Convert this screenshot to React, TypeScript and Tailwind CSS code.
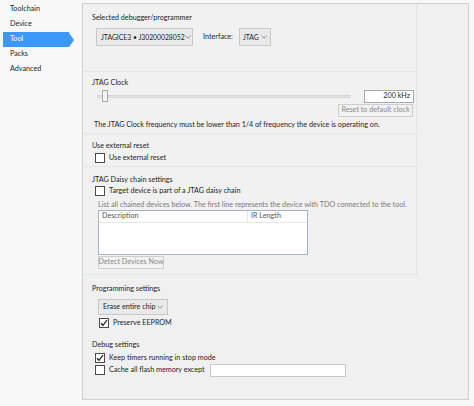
import React from "react";

const Check = ({ checked }: { checked?: boolean }) => (
  <span className="w-[10px] h-[10px] border border-[#4a4a4a] bg-white flex items-center justify-center shrink-0">
    {checked && (
      <svg width="8" height="8" viewBox="0 0 8 8">
        <path d="M1 4.2 L3 6.3 L7 1.2" stroke="#222" strokeWidth="1.3" fill="none" />
      </svg>
    )}
  </span>
);

const Chevron = () => (
  <svg width="6" height="4" viewBox="0 0 6 4" className="shrink-0">
    <path d="M0.5 0.8 L3 3.2 L5.5 0.8" stroke="#777" strokeWidth="0.8" fill="none" />
  </svg>
);

export default function App() {
  return (
    <div
      className="w-[474px] h-[406px] bg-[#f8f8f8] flex text-[#1e1e1e] overflow-hidden whitespace-nowrap"
      style={{ fontFamily: 'Lato, "Noto Sans", sans-serif', fontSize: "7.2px" }}
    >
      <div className="w-[82px] pt-[2px] flex flex-col shrink-0">
        <div className="h-[15px] pl-[10px] flex items-center">Toolchain</div>
        <div className="h-[15px] pl-[10px] flex items-center">Device</div>
        <div className="h-[15px] flex items-center relative">
          <div className="ml-[3px] w-[66px] h-[15px] bg-[#3c98f6] text-white flex items-center pl-[7px]">Tool</div>
          <div className="w-0 h-0 border-y-[7.5px] border-y-transparent border-l-[5px] border-l-[#3c98f6]" />
        </div>
        <div className="h-[15px] pl-[10px] flex items-center">Packs</div>
        <div className="h-[15px] pl-[10px] flex items-center">Advanced</div>
      </div>
      <div className="mt-[3px] mb-[6px] w-[387px] border border-[#cfcfcf] bg-[#f0f0f0] flex flex-col">
        {/* section 1 */}
        <div className="w-[334px] h-[68px] border-b border-r border-[#e6e6e6] bg-[#f1f1f1] pl-[9px] pt-[8px] shrink-0">
          <div className="leading-[12px]">Selected debugger/programmer</div>
          <div className="flex items-center mt-[4px] ml-[4px]">
            <div className="w-[97px] h-[18px] border border-[#c8c8c8] bg-[#e9e9e9] flex items-center justify-between pl-[4px] pr-[4px]">
              <span className="text-[6.8px]">JTAGICE3 • J30200028052</span>
              <Chevron />
            </div>
            <span className="ml-[10px]">Interface:</span>
            <div className="ml-[6px] w-[32px] h-[18px] border border-[#c8c8c8] bg-[#e9e9e9] flex items-center justify-between pl-[3px] pr-[3px]">
              <span className="text-[6.8px]">JTAG</span>
              <Chevron />
            </div>
          </div>
        </div>
        {/* section 2 */}
        <div className="w-[334px] h-[62px] border-b border-r border-[#e6e6e6] bg-[#f1f1f1] pl-[9px] pt-[5px] shrink-0">
          <div className="leading-[12px]">JTAG Clock</div>
          <div className="flex items-center mt-[0px]">
            <div className="relative w-[254px] h-[14px] ml-[5px] flex items-center">
              <div className="w-full h-[3px] bg-[#e2e2e2] border-y border-[#d6d6d6]" />
              <div className="absolute left-[5px] top-[1px] w-[6px] h-[12px] bg-[#f4f4f4] border border-[#a9a9a9]" />
            </div>
            <div className="ml-[13px] w-[50px] h-[13px] border border-[#a9a9a9] bg-white flex items-center justify-end pr-[3px]">200 kHz</div>
          </div>
          <div className="flex justify-end pr-[3px] mt-[1px]">
            <div className="w-[75px] h-[13px] border border-[#cdcdcd] bg-[#f2f2f2] text-[#8a8a8a] flex items-center justify-center">Reset to default clock</div>
          </div>
          <div className="mt-[2px] ml-[2px] leading-[12px]">The JTAG Clock frequency must be lower than 1/4 of frequency the device is operating on.</div>
        </div>
        {/* section 3 */}
        <div className="w-[334px] h-[31px] border-b border-r border-[#e6e6e6] bg-[#f1f1f1] pl-[9px] pt-[4px] mt-[2px] shrink-0">
          <div className="leading-[12px]">Use external reset</div>
          <div className="flex items-center gap-[4px] ml-[3px] h-[12px]">
            <Check />
            <span>Use external reset</span>
          </div>
        </div>
        {/* section 4 */}
        <div className="w-[334px] h-[107px] border-b border-r border-[#e6e6e6] bg-[#f1f1f1] pl-[9px] pt-[6px] mt-[1px] shrink-0">
          <div className="leading-[12px]">JTAG Daisy chain settings</div>
          <div className="flex items-center gap-[4px] ml-[3px] mt-[-1px] h-[12px]">
            <Check />
            <span>Target device is part of a JTAG daisy chain</span>
          </div>
          <div className="ml-[6px] mt-[2px] text-[#7a7a7a] leading-[12px]">
            List all chained devices below. The first line represents the device with TDO connected to the tool.
          </div>
          <div className="ml-[6px] mt-[-1px] w-[210px] h-[45px] border border-[#a9b3bf] bg-white">
            <div className="flex h-[12px] border-b border-[#e6e6e6] text-[#555]">
              <div className="w-[149px] border-r border-[#e6e6e6] pl-[3px] flex items-center">Description</div>
              <div className="pl-[3px] flex items-center">IR Length</div>
            </div>
          </div>
          <div className="ml-[6px] mt-[1px] w-[66px] h-[13px] border border-[#cdcdcd] bg-[#f2f2f2] text-[#8a8a8a] flex items-center justify-center">Detect Devices Now</div>
        </div>
        {/* section 5 */}
        <div className="w-[334px] h-[57px] pl-[9px] pt-[7px] mt-[1px] shrink-0">
          <div className="leading-[12px]">Programming settings</div>
          <div className="ml-[6px] mt-[4px] w-[70px] h-[16px] border border-[#c8c8c8] bg-[#e9e9e9] flex items-center justify-between px-[4px]">
            <span>Erase entire chip</span>
            <Chevron />
          </div>
          <div className="flex items-center gap-[4px] ml-[7px] mt-[2px] h-[12px]">
            <Check checked />
            <span>Preserve EEPROM</span>
          </div>
        </div>
        {/* section 6 */}
        <div className="w-[334px] pl-[9px] pt-[6px] shrink-0">
          <div className="leading-[12px]">Debug settings</div>
          <div className="flex items-center gap-[4px] ml-[3px] mt-[1px] h-[12px]">
            <Check checked />
            <span>Keep timers running in stop mode</span>
          </div>
          <div className="flex items-center ml-[3px] h-[12px]">
            <Check />
            <span className="ml-[4px]">Cache all flash memory except</span>
            <div className="ml-[5px] w-[136px] h-[13px] border border-[#c8c8c8] bg-white" />
          </div>
        </div>
      </div>
    </div>
  );
}
